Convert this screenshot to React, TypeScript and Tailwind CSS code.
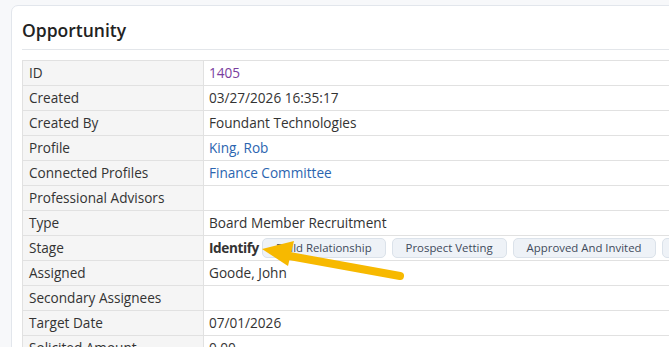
import React from 'react'

type Row = { label: string; value?: React.ReactNode }

const font = { fontFamily: '"Open Sans", "Noto Sans", sans-serif' }

const stages = ['Build Relationship', 'Prospect Vetting', 'Approved And Invited', 'Declined']

function StageCell() {
  return (
    <div className="flex items-center gap-[6px] whitespace-nowrap">
      <span className="font-bold text-[#333] tracking-[-0.4px] mr-[-3px]">Identify</span>
      {stages.map((s) => (
        <button
          key={s}
          className="h-[20px] px-[13px] rounded-[5px] border border-[#dbe2ea] bg-[#eef2f7] text-[11.4px] leading-none text-[#3e4a5b]"
        >
          {s}
        </button>
      ))}
    </div>
  )
}

const rows: Row[] = [
  { label: 'ID', value: <span className="text-[#7a3d9e]">1405</span> },
  { label: 'Created', value: '03/27/2026 16:35:17' },
  { label: 'Created By', value: 'Foundant Technologies' },
  { label: 'Profile', value: <span className="text-[#2b65b0]">King, Rob</span> },
  { label: 'Connected Profiles', value: <span className="text-[#2b65b0]">Finance Committee</span> },
  { label: 'Professional Advisors' },
  { label: 'Type', value: 'Board Member Recruitment' },
  { label: 'Stage', value: <StageCell /> },
  { label: 'Assigned', value: 'Goode, John' },
  { label: 'Secondary Assignees' },
  { label: 'Target Date', value: '07/01/2026' },
  { label: 'Solicited Amount', value: '0.00' },
]

export default function App() {
  return (
    <div className="relative w-[669px] h-[347px] overflow-hidden bg-[#f7f8fa] pl-[11px] pt-[5px]" style={font}>
      <div className="w-[720px] h-[400px] bg-white border border-[#e2e6ec] rounded-[7px] px-[10px]">
        <h2 className="h-[44px] pt-[13px] text-[17.5px] leading-[22px] font-semibold text-[#222] border-b border-[#e3e6ea]">
          Opportunity
        </h2>
        <table className="mt-[10px] w-full table-fixed border-collapse text-[13.6px] text-[#333] whitespace-nowrap">
          <colgroup>
            <col className="w-[181px]" />
            <col />
          </colgroup>
          <tbody>
            {rows.map((r) => (
              <tr key={r.label} className="h-[25px]">
                <td className="bg-[#f5f5f5] border border-[#e1e1e1] px-[6px] py-0 leading-[24px]">{r.label}</td>
                <td className="border border-[#e1e1e1] px-[5px] py-0 leading-[24px]">{r.value}</td>
              </tr>
            ))}
          </tbody>
        </table>
      </div>
      <svg className="absolute left-0 top-0 pointer-events-none" width="669" height="347" viewBox="0 0 669 347">
        <line x1="400" y1="276" x2="284" y2="255" stroke="#f7b900" strokeWidth="8" strokeLinecap="round" />
        <polygon points="262,249 294,241 288,266" fill="#f7b900" />
      </svg>
    </div>
  )
}
